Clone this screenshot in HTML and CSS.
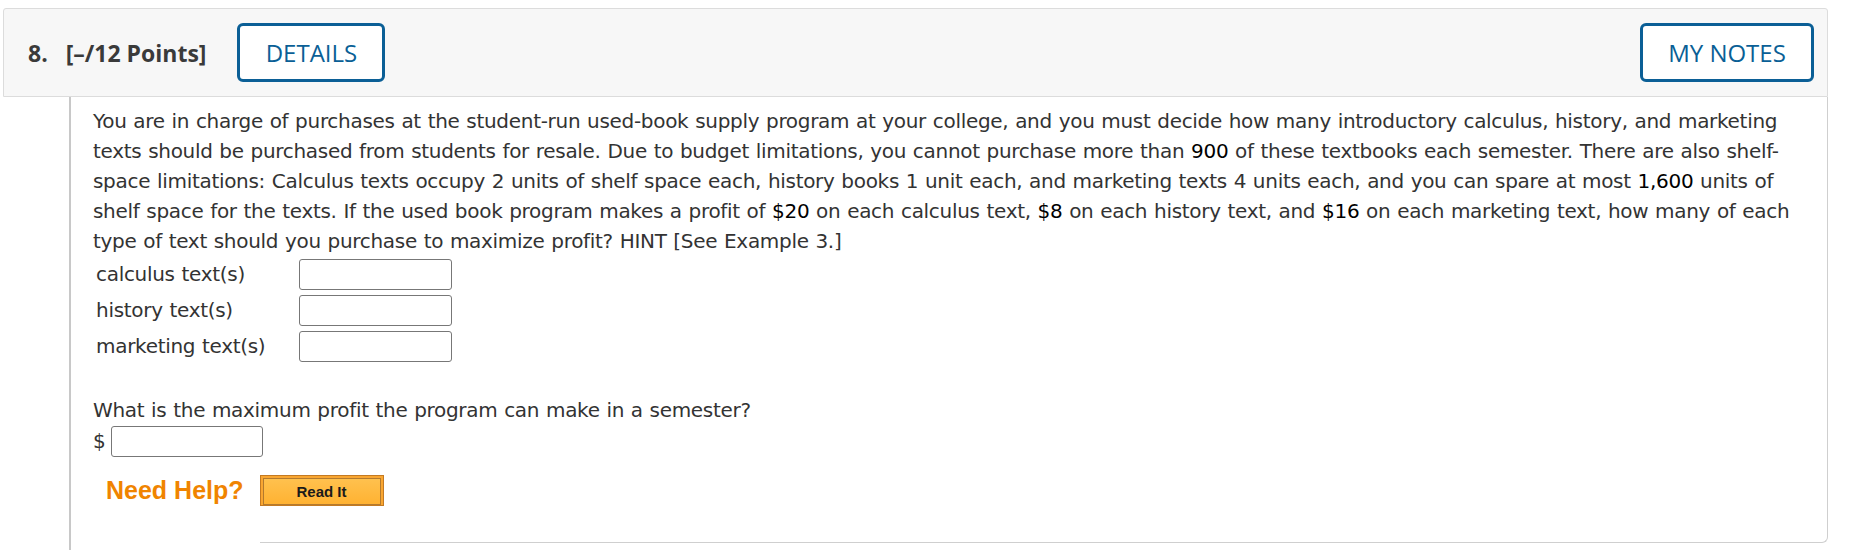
FILE: index.html
```html
<!DOCTYPE html>
<html>
<head>
<meta charset="utf-8">
<link rel="stylesheet" href="styles.css">
</head>
<body>
<div class="page">
  <div class="qhead">
    <div class="qtitle"><span class="qnum">8.</span><span class="qpts">[–/12 Points]</span></div>
    <button class="hbtn details">DETAILS</button>
    <div class="spacer"></div>
    <button class="hbtn notes">MY NOTES</button>
  </div>
  <div class="qwrap">
    <div class="qbody">
      <p class="para">You are in charge of purchases at the student-run used-book supply program at your college, and you must decide how many introductory calculus, history, and marketing<br>texts should be purchased from students for resale. Due to budget limitations, you cannot purchase more than <span class="val">900</span> of these textbooks each semester. There are also shelf-<br>space limitations: Calculus texts occupy 2 units of shelf space each, history books 1 unit each, and marketing texts 4 units each, and you can spare at most <span class="val">1,600</span> units of<br>shelf space for the texts. If the used book program makes a profit of <span class="val">$20</span> on each calculus text, <span class="val">$8</span> on each history text, and <span class="val">$16</span> on each marketing text, how many of each<br>type of text should you purchase to maximize profit? HINT [See Example 3.]</p>
      <div class="answers">
        <label class="lbl">calculus text(s)</label><input class="ans" type="text">
        <label class="lbl">history text(s)</label><input class="ans" type="text">
        <label class="lbl">marketing text(s)</label><input class="ans" type="text">
      </div>
      <p class="q2">What is the maximum profit the program can make in a semester?</p>
      <div class="dollar"><span>$</span><input class="ans money" type="text"></div>
      <div class="help">
        <span class="needhelp">Need Help?</span>
        <button class="readit"><span>Read It</span></button>
      </div>
    </div>
    <div class="qfoot"></div>
  </div>
</div>
</body>
</html>
```

FILE: styles.css
```css
html, body {
  margin: 0;
  padding: 0;
  background: #fff;
}
.page {
  padding: 8px 0 0 3px;
  width: 1825px;
}
.qhead {
  display: flex;
  align-items: center;
  height: 87px;
  border: 1px solid #dcdcdc;
  border-radius: 3px 3px 0 0;
  background: #f7f7f7;
  padding: 0 13px 0 24px;
  font-family: "Open Sans", sans-serif;
}
.qtitle {
  font-weight: 700;
  font-size: 23px;
  color: #3a3a3a;
  display: flex;
  margin-right: 31px;
}
.qnum {
  margin-right: 18px;
}
.spacer {
  flex: 1;
}
.hbtn {
  font-family: "Open Sans", sans-serif;
  font-size: 24px;
  color: #0a5f96;
  background: #fff;
  border: 3px solid #0b5f96;
  border-radius: 6px;
  height: 59px;
  padding: 0 20px;
  box-sizing: border-box;
  line-height: 1;
}
.details {
  width: 148px;
}
.notes {
  width: 174px;
}
.qwrap {
  margin-left: 66px;
  width: 1757px;
  border-left: 2px solid #c8c8c8;
  padding-bottom: 8px;
}
.qbody {
  border-right: 1px solid #cfcfcf;
  padding: 9px 0 0 22px;
  font-family: "DejaVu Sans", Verdana, sans-serif;
  font-size: 20px;
  letter-spacing: -0.3px;
  word-spacing: 0.7px;
  line-height: 30px;
  color: #333;
}
.para {
  margin: 0;
  white-space: nowrap;
}
.val {
  color: #000;
}
.answers {
  display: grid;
  grid-template-columns: 203px 153px;
  grid-auto-rows: 36px;
  align-items: center;
  padding-left: 3px;
}
.lbl {
  line-height: 30px;
}
.ans {
  box-sizing: border-box;
  width: 153px;
  height: 31px;
  border: 1px solid #777;
  border-radius: 3px;
  margin: 0;
  background: #fff;
}
.q2 {
  margin: 31px 0 0;
}
.dollar {
  display: flex;
  align-items: center;
  height: 32px;
  gap: 6px;
}
.money {
  width: 152px;
}
.help {
  display: flex;
  align-items: center;
  height: 34px;
  margin-top: 16px;
  padding-left: 13px;
  letter-spacing: 0;
  word-spacing: 0;
}
.needhelp {
  font-family: "Liberation Sans", Arial, sans-serif;
  font-weight: 700;
  font-size: 25px;
  color: #f08400;
  margin-right: 16px;
}
.readit {
  box-sizing: border-box;
  width: 124px;
  height: 31px;
  padding: 2px;
  border: 1px solid #c47a22;
  background: #f9a631;
  margin: 0;
}
.readit span {
  display: flex;
  align-items: center;
  justify-content: center;
  height: 100%;
  border: 1px solid #b37a2e;
  background: linear-gradient(#ffc14e, #ffb232);
  font-family: "Liberation Sans", Arial, sans-serif;
  font-weight: 700;
  font-size: 15px;
  color: #1a1a1a;
}
.qfoot {
  margin-left: 189px;
  height: 35px;
  border-right: 1px solid #cfcfcf;
  border-bottom: 1px solid #cfcfcf;
  border-bottom-right-radius: 6px;
}
```
